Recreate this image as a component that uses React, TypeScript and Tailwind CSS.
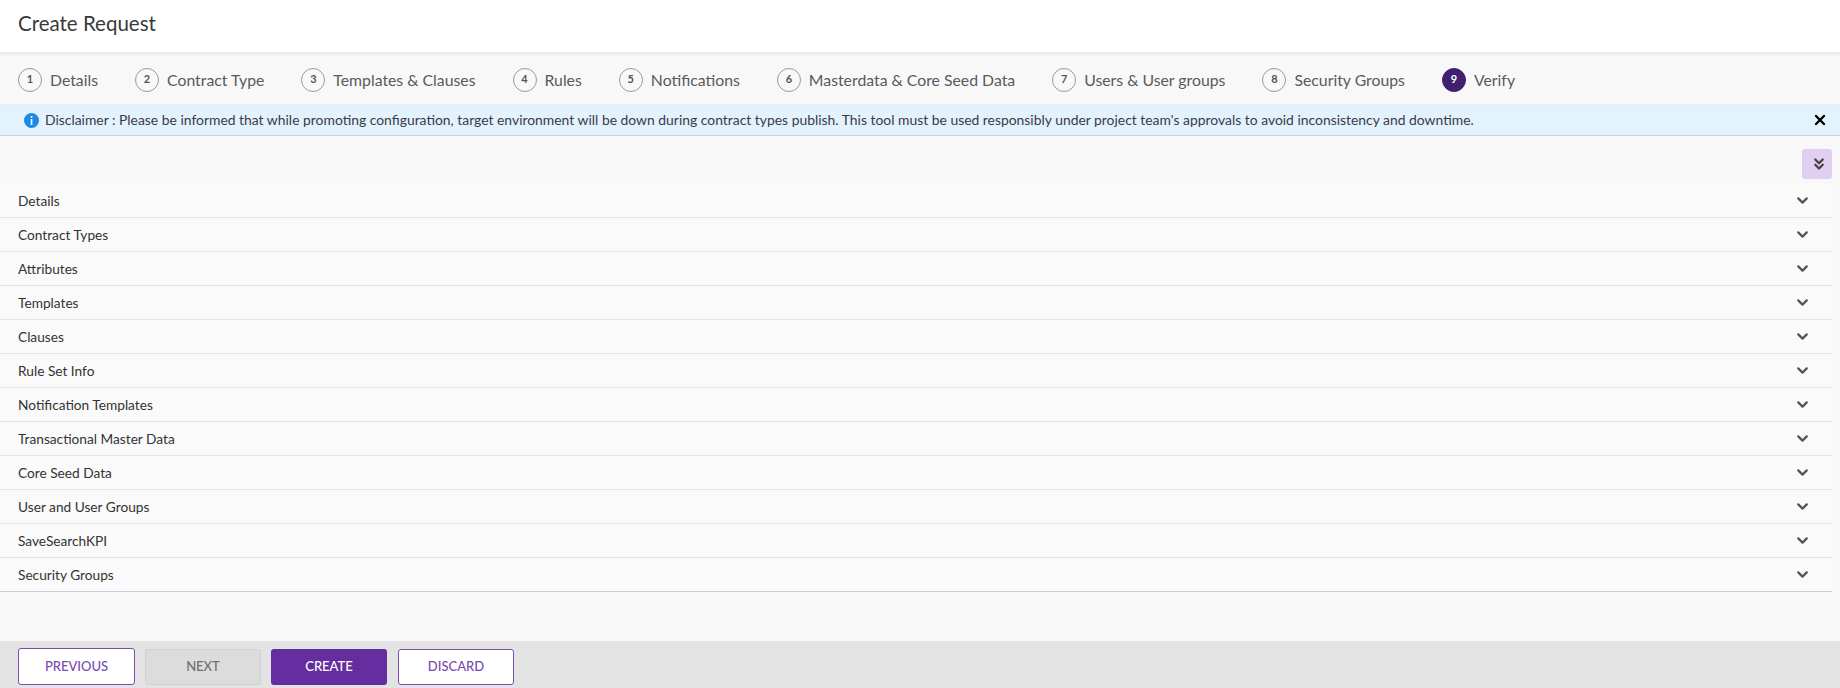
import React from 'react';
import { ChevronDown, ChevronsDown, X } from 'lucide-react';

const steps = [
  'Details',
  'Contract Type',
  'Templates & Clauses',
  'Rules',
  'Notifications',
  'Masterdata & Core Seed Data',
  'Users & User groups',
  'Security Groups',
  'Verify',
];

const sections = [
  'Details',
  'Contract Types',
  'Attributes',
  'Templates',
  'Clauses',
  'Rule Set Info',
  'Notification Templates',
  'Transactional Master Data',
  'Core Seed Data',
  'User and User Groups',
  'SaveSearchKPI',
  'Security Groups',
];

const Step = ({ n, label, active }: { n: number; label: string; active: boolean }) => (
  <div className="flex items-center gap-2">
    <span
      className={
        active
          ? 'flex h-6 w-6 items-center justify-center rounded-full border border-[#41206f] bg-[#41206f] text-[11px] font-bold text-white'
          : 'flex h-6 w-6 items-center justify-center rounded-full border border-[#9a9a9a] text-[11px] font-bold text-[#555]'
      }
    >
      {n}
    </span>
    <span className="text-[15.8px] text-[#5a5a5a]">{label}</span>
  </div>
);

const App = () => {
  return (
    <div className="flex h-[688px] w-[1840px] flex-col overflow-hidden bg-[#f8f8f8] font-['Lato',sans-serif] text-[#333]">
      <header className="relative flex h-[52px] items-center bg-white px-[18px] pb-[6px] shadow-[0_2px_4px_rgba(0,0,0,0.08)]">
        <h1 className="text-[20.5px] font-normal leading-none text-[#3a3a3a]">Create Request</h1>
      </header>

      <nav className="flex h-[52px] items-center gap-[37px] px-[18px] pt-[3px]">
        {steps.map((s, i) => (
          <Step key={s} n={i + 1} label={s} active={i === 8} />
        ))}
      </nav>

      <div className="flex h-8 items-center border-y border-t-[#e8eef2] border-b-[#c4d3de] bg-[#e3f3fd] pl-[24px] pr-[12px]">
        <span className="mr-[6px] flex h-[15px] w-[15px] items-center justify-center rounded-full bg-[#1e88e5] text-[11px] font-bold leading-none text-white">
          i
        </span>
        <p className="flex-1 text-[13.9px] text-[#3a3a4a]">
          Disclaimer : Please be informed that while promoting configuration, target environment will be down during contract types publish. This tool must be used responsibly under project team's approvals to avoid inconsistency and downtime.
        </p>
        <X className="h-4 w-4 text-black" strokeWidth={3.5} />
      </div>

      <div className="flex justify-end pr-2 pt-[13px]">
        <button className="flex h-[30px] w-[30px] items-center justify-center rounded-[3px] bg-[#e0cff1]">
          <ChevronsDown className="ml-[3px] h-[18px] w-[18px] text-[#444]" strokeWidth={3} />
        </button>
      </div>

      <div className="mt-[5px] flex-1">
        <div className="mr-2 bg-[#fafafa]">
          {sections.map((s) => (
            <div key={s} className="flex h-[34px] items-center justify-between border-b border-[#e4e2ee] pl-[18px] pr-[21px] last:border-[#cfc9dc]">
              <span className="pt-px text-[13.7px] text-[#333]">{s}</span>
              <ChevronDown className="h-[17px] w-[17px] text-[#555]" strokeWidth={3.2} />
            </div>
          ))}
        </div>
      </div>

      <footer className="flex h-[47px] items-end gap-[10px] bg-[#e3e3e3] pb-[3px] pl-[18px]">
        <button className="h-[37px] w-[117px] rounded-[3px] border border-[#7a4bb0] bg-white text-[13px] font-medium text-[#7a4bb0]">PREVIOUS</button>
        <button className="h-[36px] w-[116px] rounded-[3px] border border-[#d0d0d0] bg-[#dcdcdc] text-[13px] font-medium text-[#6f6f6f]">NEXT</button>
        <button className="h-[36px] w-[116px] rounded-[3px] bg-[#652da0] text-[13px] font-medium text-white">CREATE</button>
        <button className="ml-px h-[36px] w-[116px] rounded-[3px] border border-[#7a4bb0] bg-white text-[13px] font-medium text-[#7a4bb0]">DISCARD</button>
      </footer>
    </div>
  );
};

export default App;
